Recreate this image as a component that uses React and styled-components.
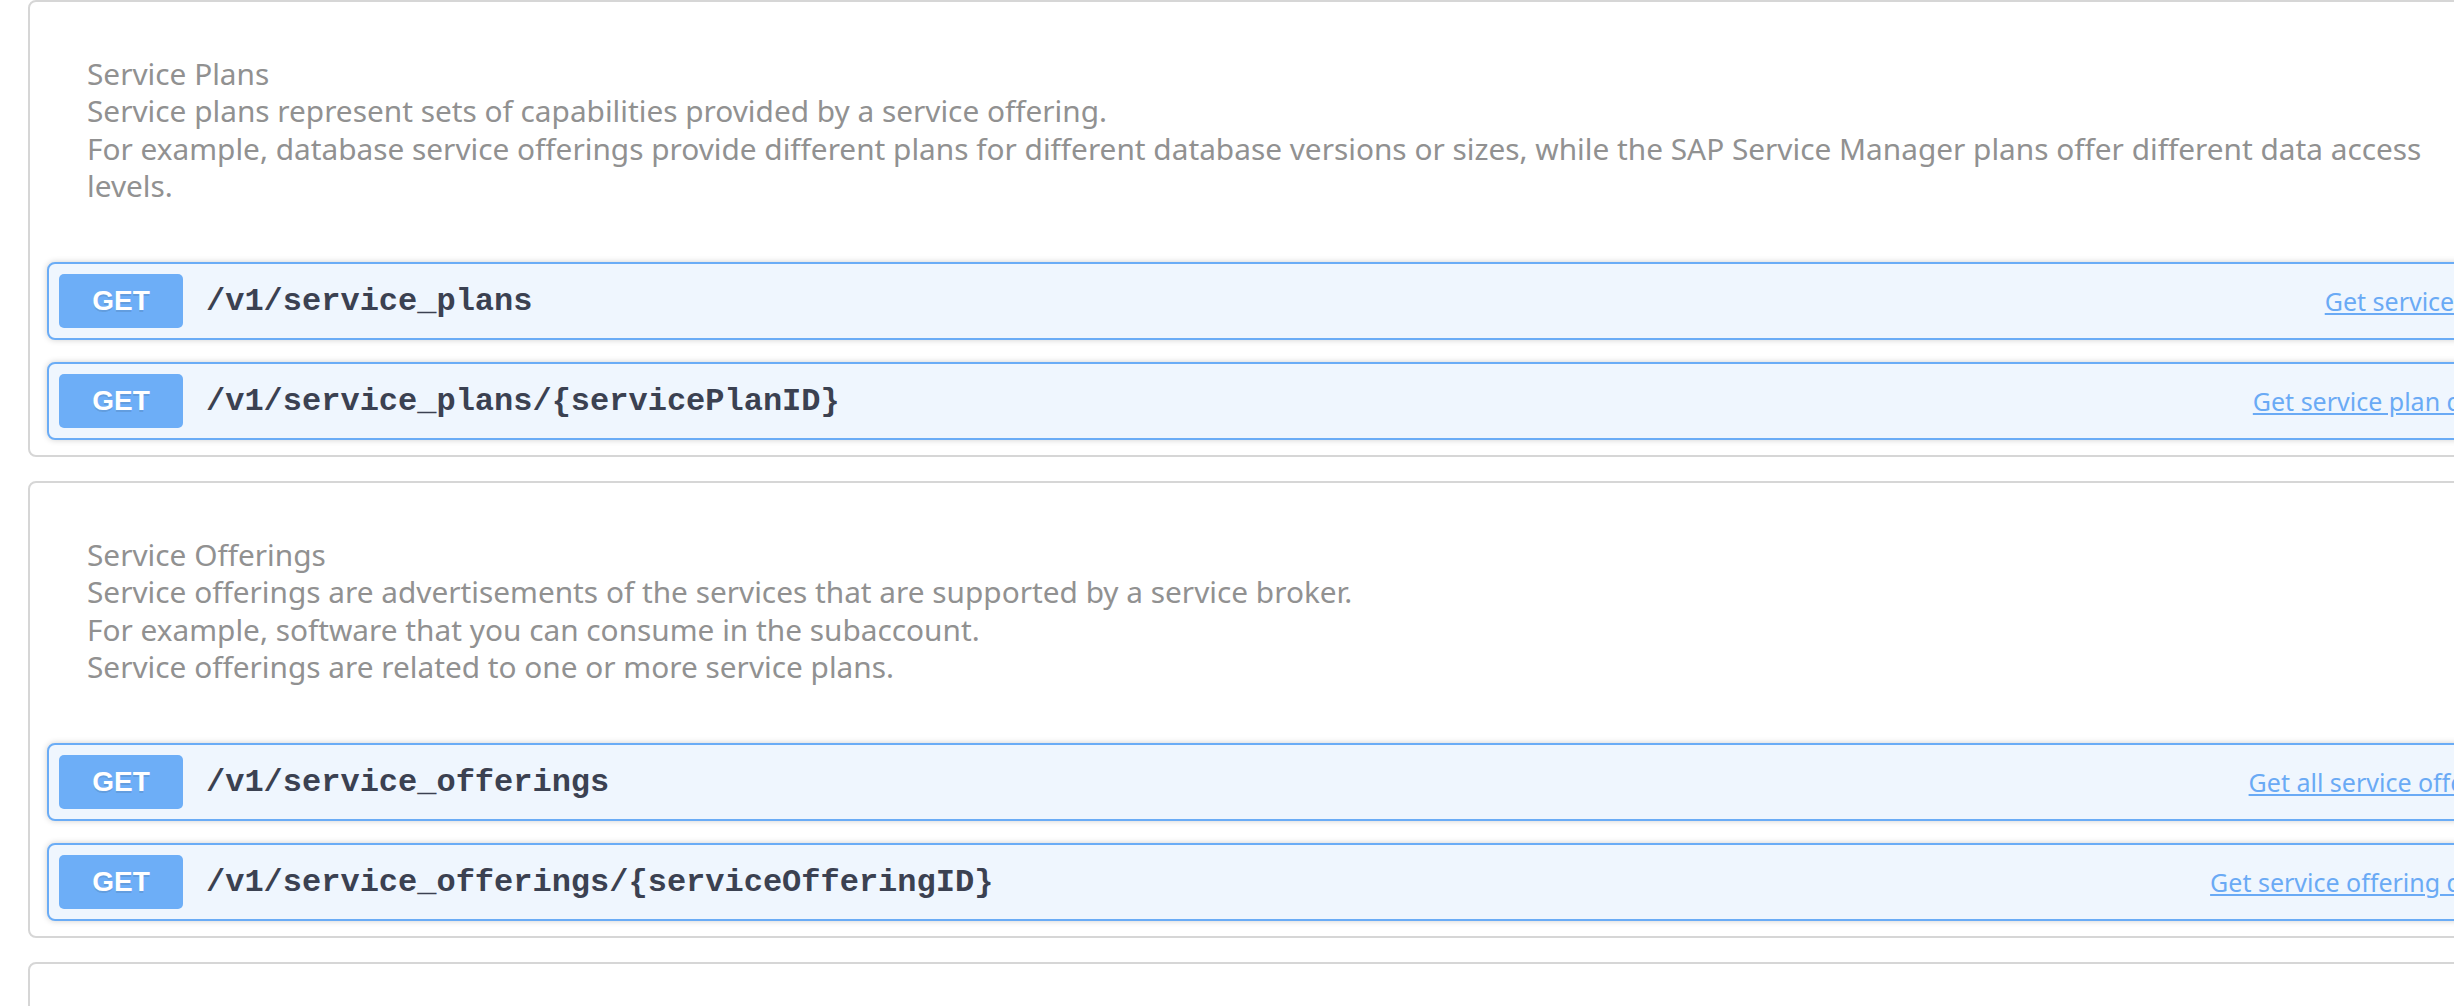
import React from "react";
import styled, { createGlobalStyle } from "styled-components";

const GlobalStyle = createGlobalStyle`
  body {
    margin: 0;
    background: #ffffff;
    overflow: hidden;
  }
`;

const Page = styled.div`
  width: 2600px;
  padding-left: 28px;
  display: flex;
  flex-direction: column;
  gap: 24px;
`;

const TagCard = styled.section`
  border: 2px solid #d6d6d6;
  border-radius: 8px;
  padding: 0 14px 15px 17px;
  min-height: ${(p) => p.minHeight || "auto"};
`;

const TagHeader = styled.div`
  padding: 53px 0 0 40px;
  max-width: 2380px;
  font-family: "Noto Sans", "Open Sans", sans-serif;
  font-size: 29.8px;
  line-height: 37.3px;
  color: #919191;
`;

const Line = styled.div``;

const Operations = styled.div`
  margin-top: 58px;
  display: flex;
  flex-direction: column;
  gap: 22px;
`;

const OpRow = styled.div`
  display: flex;
  align-items: center;
  padding: 10px;
  background: #eff6fe;
  border: 2px solid #6aacf6;
  border-radius: 8px;
  box-shadow: 0 0 6px rgba(0, 0, 0, 0.19);
`;

const Method = styled.span`
  flex: none;
  width: 124px;
  height: 54px;
  display: flex;
  align-items: center;
  justify-content: center;
  border-radius: 5px;
  background: #6daef7;
  color: #ffffff;
  font-family: "Liberation Sans", Arial, sans-serif;
  font-weight: 700;
  font-size: 28px;
  text-shadow: 0 2px 0 rgba(0, 0, 0, 0.1);
`;

const Path = styled.span`
  margin-left: 23px;
  font-family: "Liberation Mono", "Courier New", monospace;
  font-weight: 700;
  font-size: 32px;
  color: #3b4151;
  white-space: nowrap;
`;

const Summary = styled.a`
  flex: 1;
  text-align: right;
  padding-right: 76px;
  font-family: "Noto Sans", "Open Sans", sans-serif;
  font-size: 25px;
  color: #6aaaf5;
  text-decoration: underline;
  white-space: nowrap;
`;

const tags = [
  {
    name: "Service Plans",
    lines: [
      "Service plans represent sets of capabilities provided by a service offering.",
      "For example, database service offerings provide different plans for different database versions or sizes, while the SAP Service Manager plans offer different data access levels.",
    ],
    ops: [
      { path: "/v1/service_plans", summary: "Get service plans" },
      { path: "/v1/service_plans/{servicePlanID}", summary: "Get service plan details" },
    ],
  },
  {
    name: "Service Offerings",
    lines: [
      "Service offerings are advertisements of the services that are supported by a service broker.",
      "For example, software that you can consume in the subaccount.",
      "Service offerings are related to one or more service plans.",
    ],
    ops: [
      { path: "/v1/service_offerings", summary: "Get all service offerings" },
      {
        path: "/v1/service_offerings/{serviceOfferingID}",
        summary: "Get service offering details",
      },
    ],
  },
];

function Tag({ tag }) {
  return (
    <TagCard>
      <TagHeader>
        <Line>{tag.name}</Line>
        {tag.lines.map((l) => (
          <Line key={l}>{l}</Line>
        ))}
      </TagHeader>
      <Operations>
        {tag.ops.map((op) => (
          <OpRow key={op.path}>
            <Method>GET</Method>
            <Path>{op.path}</Path>
            <Summary href="#">{op.summary}</Summary>
          </OpRow>
        ))}
      </Operations>
    </TagCard>
  );
}

export default function App() {
  return (
    <>
      <GlobalStyle />
      <Page>
        {tags.map((t) => (
          <Tag key={t.name} tag={t} />
        ))}
        <TagCard minHeight="200px" />
      </Page>
    </>
  );
}
